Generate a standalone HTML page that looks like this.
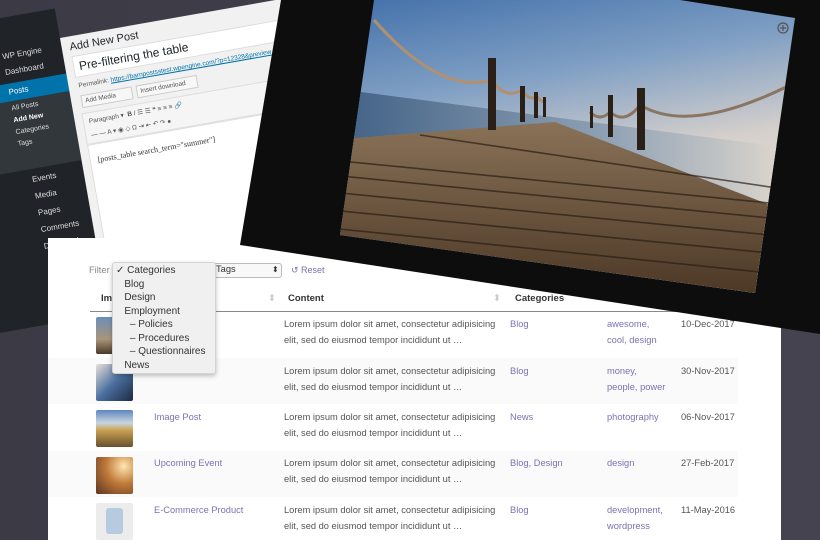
<!DOCTYPE html>
<html><head><meta charset="utf-8"><style>
*{margin:0;padding:0;box-sizing:border-box}
body{width:820px;height:540px;overflow:hidden;background:linear-gradient(90deg,#3c3a45,#45434f);font-family:"Liberation Sans",sans-serif;position:relative}
.abs{position:absolute}
#wp{left:60px;top:38px;transform:rotate(-10deg);transform-origin:0 0;width:300px;height:320px}
#side{left:-130px;top:-30px;width:130px;height:310px;background:#202428;color:#ddd;font-size:8px}
#side div{position:absolute;left:70px}
#ed{left:0;top:0;width:300px;height:320px;background:#f1f1f1}
.tb{position:absolute;font-size:6.5px;color:#555}
#tbl{left:48px;top:238px;width:733px;height:302px;background:#fff}
.t{position:absolute;font-size:9.3px;color:#555;line-height:15.5px}
.l{color:#7b72b5}
.h{font-weight:bold;color:#333;font-size:9.5px}
.row{position:absolute;left:48px;width:690px;height:46px;background:#fafafa}
.th{position:absolute;left:47px;width:37px;height:37px;border-radius:2px}
#dd{left:112px;top:262px;width:104px;height:112px;background:#f0f0f0;border:1px solid #d4d4d4;box-shadow:0 2px 5px rgba(0,0,0,.25);font-size:10px;color:#333;line-height:13.5px;padding:1px 0 0 3px;border-radius:3px}
</style></head><body>

<div id="wp" class="abs">
 <div id="side" class="abs">
  <div style="top:34px">WP Engine</div>
  <div style="top:50px">Dashboard</div>
  <div style="top:66px;left:0;width:130px;height:18px;background:#0073aa"></div>
  <div style="top:70px;color:#fff">Posts</div>
  <div style="top:84px;left:0;width:130px;height:70px;background:#32373c"></div>
  <div style="top:88px;font-size:7px">All Posts</div>
  <div style="top:100px;font-size:7px;color:#fff;font-weight:bold">Add New</div>
  <div style="top:112px;font-size:7px">Categories</div>
  <div style="top:124px;font-size:7px">Tags</div>
  <div style="top:160px;left:78px">Events</div>
  <div style="top:177px;left:78px">Media</div>
  <div style="top:194px;left:78px">Pages</div>
  <div style="top:211px;left:78px">Comments</div>
  <div style="top:228px;left:78px">Downloads</div>
 </div>
 <div id="ed" class="abs">
  <div class="tb" style="left:8px;top:5px;font-size:11px;color:#23282d">Add New Post</div>
  <div class="abs" style="left:8px;top:20px;width:290px;height:22px;background:#fff;border:1px solid #ddd"></div>
  <div class="tb" style="left:14px;top:24px;font-size:12px;color:#23282d">Pre-filtering the table</div>
  <div class="tb" style="left:10px;top:47px">Permalink: <span style="color:#0073aa;text-decoration:underline">https://barnpostsstest.wpengine.com/?p=12328&amp;preview</span></div>
  <div class="abs" style="left:10px;top:60px;width:52px;height:13px;background:#f7f7f7;border:1px solid #ccc"></div>
  <div class="tb" style="left:14px;top:63px">Add Media</div>
  <div class="abs" style="left:66px;top:60px;width:62px;height:13px;background:#f7f7f7;border:1px solid #ccc"></div>
  <div class="tb" style="left:70px;top:63px">Insert download</div>
  <div class="abs" style="left:8px;top:78px;width:290px;height:32px;background:#f5f5f5;border:1px solid #ddd"></div>
  <div class="tb" style="left:14px;top:83px">Paragraph ▾ &nbsp;<b>B</b> <i>I</i> ☰ ☰ ❝ ≡ ≡ ≡ 🔗</div>
  <div class="tb" style="left:14px;top:97px">— — A ▾ ◉ ◇ Ω ⇥ ⇤ ↶ ↷ ●</div>
  <div class="abs" style="left:8px;top:110px;width:290px;height:210px;background:#fff;border:1px solid #ddd"></div>
  <div class="tb" style="left:16px;top:122px;font-family:'Liberation Serif',serif;font-size:8px;color:#333">[posts_table search_term="summer"]</div>
 </div>
</div>

<div id="tbl" class="abs"></div>
<div class="row" style="top:358px"></div>
<div class="row" style="top:451px"></div>

<div class="t" style="left:89px;top:263px;color:#888">Filter</div>
<div class="abs" style="left:205px;top:263px;width:77px;height:15px;border:1px solid #bbb;border-radius:3px;background:#f8f8f8"></div>
<div class="t" style="left:216px;top:262px;color:#333">Tags</div>
<div class="t" style="left:272px;top:262px;color:#333;font-size:8px">⬍</div>
<div class="t l" style="left:291px;top:263px;font-size:9px">↺ Reset</div>

<div class="t h" style="left:101px;top:291px">Im</div>
<div class="t h" style="left:288px;top:291px">Content</div>
<div class="t h" style="left:515px;top:291px">Categories</div>
<div class="t" style="left:268px;top:291px;color:#ccc">⬍</div>
<div class="t" style="left:493px;top:291px;color:#ccc">⬍</div>
<div class="abs" style="left:90px;top:311px;width:650px;height:1px;background:#888"></div>

<div class="th" style="left:96px;top:317px;background:linear-gradient(#6b8fb8,#a9957a 60%,#4a3a2a)"></div>
<div class="th" style="left:96px;top:364px;background:linear-gradient(135deg,#e8e0d8,#4a6fa0 50%,#1d2a40)"></div>
<div class="th" style="left:96px;top:410px;background:linear-gradient(#5c86c0,#c9d5e0 35%,#c8a050 55%,#6a5030)"></div>
<div class="th" style="left:96px;top:457px;background:radial-gradient(circle at 75% 25%,#ffe6b0,#c07a3a 45%,#5a3520)"></div>
<div class="th" style="left:96px;top:503px;background:#ececec"></div>
<div class="abs" style="left:106px;top:508px;width:17px;height:26px;background:#b6cbe0;border-radius:3px"></div>

<div class="t l" style="left:154px;top:410px">Image Post</div>
<div class="t l" style="left:154px;top:456px">Upcoming Event</div>
<div class="t l" style="left:154px;top:503px">E-Commerce Product</div>

<div class="t" style="left:284px;top:317px">Lorem ipsum dolor sit amet, consectetur adipisicing<br>elit, sed do eiusmod tempor incididunt ut …</div>
<div class="t" style="left:284px;top:364px">Lorem ipsum dolor sit amet, consectetur adipisicing<br>elit, sed do eiusmod tempor incididunt ut …</div>
<div class="t" style="left:284px;top:410px">Lorem ipsum dolor sit amet, consectetur adipisicing<br>elit, sed do eiusmod tempor incididunt ut …</div>
<div class="t" style="left:284px;top:456px">Lorem ipsum dolor sit amet, consectetur adipisicing<br>elit, sed do eiusmod tempor incididunt ut …</div>
<div class="t" style="left:284px;top:503px">Lorem ipsum dolor sit amet, consectetur adipisicing<br>elit, sed do eiusmod tempor incididunt ut …</div>

<div class="t l" style="left:510px;top:317px">Blog</div>
<div class="t l" style="left:510px;top:364px">Blog</div>
<div class="t l" style="left:510px;top:410px">News</div>
<div class="t l" style="left:510px;top:456px">Blog, Design</div>
<div class="t l" style="left:510px;top:503px">Blog</div>

<div class="t l" style="left:607px;top:317px">awesome,<br>cool, design</div>
<div class="t l" style="left:607px;top:364px">money,<br>people, power</div>
<div class="t l" style="left:607px;top:410px">photography</div>
<div class="t l" style="left:607px;top:456px">design</div>
<div class="t l" style="left:607px;top:503px">development,<br>wordpress</div>

<div class="t" style="left:681px;top:317px">10-Dec-2017</div>
<div class="t" style="left:681px;top:364px">30-Nov-2017</div>
<div class="t" style="left:681px;top:410px">06-Nov-2017</div>
<div class="t" style="left:681px;top:456px">27-Feb-2017</div>
<div class="t" style="left:681px;top:503px">11-May-2016</div>

<div id="dd" class="abs">✓ Categories<br>&nbsp;&nbsp;&nbsp;Blog<br>&nbsp;&nbsp;&nbsp;Design<br>&nbsp;&nbsp;&nbsp;Employment<br>&nbsp;&nbsp;&nbsp;&nbsp;&nbsp;– Policies<br>&nbsp;&nbsp;&nbsp;&nbsp;&nbsp;– Procedures<br>&nbsp;&nbsp;&nbsp;&nbsp;&nbsp;– Questionnaires<br>&nbsp;&nbsp;&nbsp;News</div>

<svg class="abs" style="left:0;top:0" width="820" height="540" viewBox="0 0 820 540">
 <defs>
  <linearGradient id="sky" x1="0" y1="0" x2="0.3" y2="1">
   <stop offset="0" stop-color="#3f6ea8"/><stop offset="0.35" stop-color="#7f9fc4"/><stop offset="0.65" stop-color="#d6d0cc"/><stop offset="1" stop-color="#efe2d2"/>
  </linearGradient>
  <linearGradient id="sea" x1="0" y1="0" x2="1" y2="0">
   <stop offset="0" stop-color="#3f5f84"/><stop offset="0.6" stop-color="#8ea1b4"/><stop offset="1" stop-color="#e0d8ce"/>
  </linearGradient>
  <linearGradient id="wood" x1="0" y1="0" x2="0" y2="1">
   <stop offset="0" stop-color="#8a7258"/><stop offset="1" stop-color="#4a3624"/>
  </linearGradient>
  <clipPath id="ph"><polygon points="374,0 680,0 795,18 755,293 340,235"/></clipPath>
 </defs>
 <polygon points="281,0 820,0 820,334 240,245" fill="#0d0d0d"/>
 <g clip-path="url(#ph)">
  <rect x="300" y="0" width="520" height="300" fill="url(#sky)"/>
  <polygon points="330,88 790,148 790,300 330,240" fill="url(#sea)"/>
  <polygon points="330,140 555,122 770,205 760,300 330,250" fill="url(#wood)"/>
  <g stroke="#2a1e14" stroke-width="1.6" opacity="0.7">
   <line x1="330" y1="160" x2="790" y2="205"/><line x1="330" y1="175" x2="790" y2="220"/>
   <line x1="330" y1="192" x2="790" y2="237"/><line x1="330" y1="210" x2="790" y2="255"/>
   <line x1="330" y1="228" x2="790" y2="275"/><line x1="420" y1="135" x2="790" y2="190"/>
  </g>
  <path d="M374,20 Q440,95 492,80 Q505,100 522,90 Q530,102 537,96 Q542,104 546,100" stroke="#b09070" stroke-width="3" fill="none"/>
  <path d="M590,112 Q600,122 610,112 Q625,125 640,105 Q690,135 790,85" stroke="#8a7560" stroke-width="3" fill="none"/>
  <g fill="#2a2018">
   <rect x="488" y="58" width="8" height="72"/><rect x="520" y="86" width="5" height="36"/>
   <rect x="534" y="92" width="4" height="26"/><rect x="543" y="97" width="3" height="20"/>
   <rect x="608" y="95" width="5" height="42"/><rect x="637" y="88" width="8" height="62"/>
   <rect x="590" y="106" width="3" height="22"/>
  </g>
  <circle cx="783" cy="28" r="5" fill="none" stroke="#555" stroke-width="1.3"/>
  <path d="M783,25v6M780,28h6" stroke="#555" stroke-width="1.2"/>
 </g>
</svg>
</body></html>
